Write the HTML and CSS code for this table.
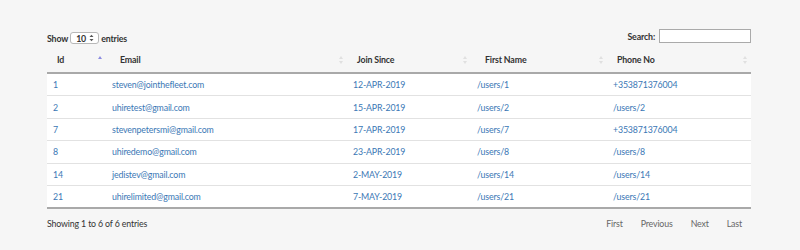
FILE: index.html
```html
<!DOCTYPE html>
<html>
<head>
<meta charset="utf-8">
<link rel="stylesheet" href="styles.css">
</head>
<body>
<div class="wrap">
  <div class="controls">
    <label class="length">Show
      <span class="select">10
        <svg width="5" height="8" viewBox="0 0 5 8"><path d="M0.5 3 L2.5 0.8 L4.5 3 Z M0.5 5 L2.5 7.2 L4.5 5 Z" fill="#555"/></svg>
      </span>
      entries</label>
    <label class="search">Search: <span class="input"></span></label>
  </div>
  <table class="grid">
    <colgroup>
      <col class="c1"><col class="c2"><col class="c3"><col class="c4"><col class="c5">
    </colgroup>
    <thead>
      <tr>
        <th>Id<span class="sort asc"></span></th>
        <th class="h-email">Email<span class="sort"></span></th>
        <th>Join Since<span class="sort"></span></th>
        <th class="h-name">First Name<span class="sort"></span></th>
        <th>Phone No<span class="sort"></span></th>
      </tr>
    </thead>
    <tbody>
      <tr><td>1</td><td>steven@jointhefleet.com</td><td>12-APR-2019</td><td>/users/1</td><td>+353871376004</td></tr>
      <tr><td>2</td><td>uhiretest@gmail.com</td><td>15-APR-2019</td><td>/users/2</td><td>/users/2</td></tr>
      <tr><td>7</td><td>stevenpetersmi@gmail.com</td><td>17-APR-2019</td><td>/users/7</td><td>+353871376004</td></tr>
      <tr><td>8</td><td>uhiredemo@gmail.com</td><td>23-APR-2019</td><td>/users/8</td><td>/users/8</td></tr>
      <tr><td>14</td><td>jedistev@gmail.com</td><td>2-MAY-2019</td><td>/users/14</td><td>/users/14</td></tr>
      <tr><td>21</td><td>uhirelimited@gmail.com</td><td>7-MAY-2019</td><td>/users/21</td><td>/users/21</td></tr>
    </tbody>
  </table>
  <div class="footer">
    <span class="info">Showing 1 to 6 of 6 entries</span>
    <nav class="paging">
      <span>First</span><span>Previous</span><span>Next</span><span>Last</span>
    </nav>
  </div>
</div>
</body>
</html>
```
FILE: styles.css
```css
html, body {
  margin: 0;
  background: #f6f6f6;
}
body {
  font-family: Lato, "Open Sans", sans-serif;
  font-size: 8.8px;
  letter-spacing: -0.15px;
  color: #333;
}
.wrap {
  width: 704px;
  margin-left: 47px;
  padding-top: 29px;
}
.controls {
  display: flex;
  justify-content: space-between;
  align-items: flex-start;
  height: 18px;
}
.length {
  display: flex;
  align-items: center;
  gap: 2px;
  font-weight: bold;
  margin-top: 3px;
}
.select {
  display: inline-flex;
  align-items: center;
  justify-content: space-between;
  box-sizing: border-box;
  width: 29px;
  height: 12px;
  padding: 0 4px 0 5px;
  border: 1px solid #b8b8b8;
  border-radius: 3px;
  background: #fff;
  font-weight: bold;
}
.search {
  display: flex;
  align-items: center;
  gap: 4px;
  font-weight: bold;
}
.input {
  display: block;
  box-sizing: border-box;
  width: 92px;
  height: 14px;
  border: 1px solid #aaa;
  background: #fff;
}
.grid {
  width: 704px;
  border-collapse: collapse;
  table-layout: fixed;
}
.c1 { width: 59px; }
.c2 { width: 241px; }
.c3 { width: 124px; }
.c4 { width: 136px; }
.c5 { width: 144px; }
th {
  position: relative;
  height: 25px;
  padding: 0 0 0 10px;
  text-align: left;
  font-weight: bold;
  border-bottom: 2px solid #a9a9a9;
}
th.h-email { padding-left: 14px; }
th.h-name { padding-left: 14px; }
.sort {
  position: absolute;
  right: 3px;
  top: 9px;
  width: 5px;
  height: 9px;
}
.sort::before, .sort::after {
  content: "";
  position: absolute;
  left: 0;
  border-left: 2.5px solid transparent;
  border-right: 2.5px solid transparent;
}
.sort::before {
  top: 0;
  border-bottom: 3px solid #e0e0e0;
}
.sort::after {
  top: 5px;
  border-top: 3px solid #e0e0e0;
}
.sort.asc::before { border-bottom-color: #8c8ce0; }
.sort.asc::after { border-top-color: transparent; }
tbody tr {
  background: #fff;
}
td {
  height: 21.4px;
  padding: 0 0 0 6px;
  color: #3a77b5;
  border-top: 1px solid #e2e2e2;
}
tbody tr:first-child td { border-top: none; }
tbody tr:last-child td { border-bottom: 2px solid #a9a9a9; }
.footer {
  display: flex;
  justify-content: space-between;
  align-items: center;
  margin-top: 9px;
  color: #333;
}
.paging {
  display: flex;
  color: #666;
}
.paging span {
  padding: 0 9px;
}
```
